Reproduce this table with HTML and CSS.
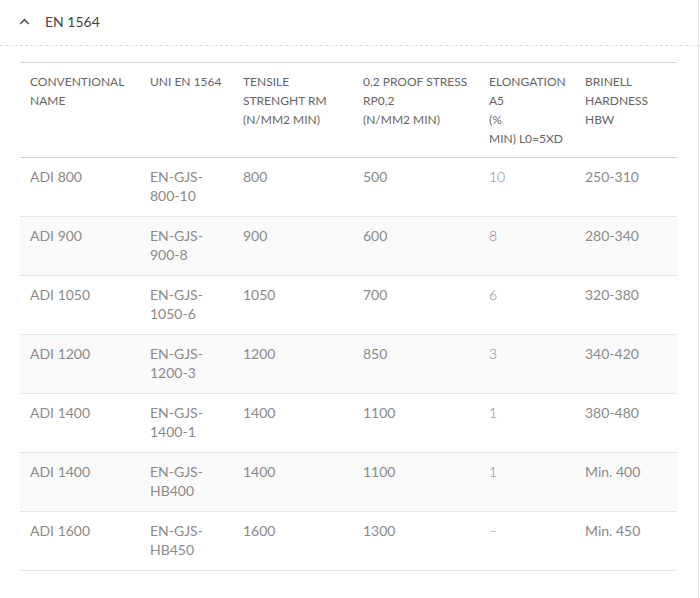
FILE: index.html
```html
<!DOCTYPE html>
<html>
<head>
<meta charset="utf-8">
<link rel="stylesheet" href="styles.css">
</head>
<body>
<div class="panel">
  <div class="acc-head">
    <svg class="chev" width="11" height="7" viewBox="0 0 11 7"><path d="M1.2 6 L5.5 1.6 L9.8 6" fill="none" stroke="#555" stroke-width="1.6"/></svg>
    <span class="acc-title">EN 1564</span>
  </div>
  <div class="acc-body">
    <table class="spec">
      <colgroup>
        <col class="c1"><col class="c2"><col class="c3"><col class="c4"><col class="c5"><col class="c6">
      </colgroup>
      <thead>
        <tr>
          <th>CONVENTIONAL<br>NAME</th>
          <th>UNI EN 1564</th>
          <th>TENSILE<br>STRENGHT RM<br>(N/MM2 MIN)</th>
          <th>0,2 PROOF STRESS<br>RP0,2<br>(N/MM2 MIN)</th>
          <th>ELONGATION<br>A5<br>(%<br>MIN) L0=5XD</th>
          <th>BRINELL<br>HARDNESS<br>HBW</th>
        </tr>
      </thead>
      <tbody>
        <tr><td>ADI 800</td><td>EN-GJS-<br>800-10</td><td>800</td><td>500</td><td class="lt">10</td><td>250-310</td></tr>
        <tr><td>ADI 900</td><td>EN-GJS-<br>900-8</td><td>900</td><td>600</td><td class="lt">8</td><td>280-340</td></tr>
        <tr><td>ADI 1050</td><td>EN-GJS-<br>1050-6</td><td>1050</td><td>700</td><td class="lt">6</td><td>320-380</td></tr>
        <tr><td>ADI 1200</td><td>EN-GJS-<br>1200-3</td><td>1200</td><td>850</td><td class="lt">3</td><td>340-420</td></tr>
        <tr><td>ADI 1400</td><td>EN-GJS-<br>1400-1</td><td>1400</td><td>1100</td><td class="lt">1</td><td>380-480</td></tr>
        <tr><td>ADI 1400</td><td>EN-GJS-<br>HB400</td><td>1400</td><td>1100</td><td class="lt">1</td><td>Min. 400</td></tr>
        <tr><td>ADI 1600</td><td>EN-GJS-<br>HB450</td><td>1600</td><td>1300</td><td class="lt">–</td><td>Min. 450</td></tr>
      </tbody>
    </table>
  </div>
</div>
</body>
</html>
```
FILE: styles.css
```css
html, body {
  margin: 0;
  padding: 0;
  background: #fff;
}
body {
  font-family: Lato, "Open Sans", sans-serif;
}
.panel {
  width: 699px;
  min-height: 598px;
  border-right: 1px solid #e4e4e4;
  box-sizing: border-box;
}
.acc-head {
  height: 46px;
  box-sizing: border-box;
  display: flex;
  align-items: center;
  padding-left: 19px;
  padding-bottom: 3px;
  border-bottom: 1px dashed #dcdcdc;
}
.chev {
  display: block;
  margin-right: 15px;
}
.acc-title {
  font-size: 14px;
  color: #444;
}
.acc-body {
  padding: 16px 0 0 20px;
}
.spec {
  border-collapse: collapse;
  table-layout: fixed;
  width: 657px;
  border-top: 1px solid #d6d6d6;
}
.c1 { width: 120px; }
.c2 { width: 93px; }
.c3 { width: 120px; }
.c4 { width: 126px; }
.c5 { width: 96px; }
.c6 { width: 102px; }
.spec th {
  text-align: left;
  vertical-align: top;
  font-weight: 400;
  font-size: 12px;
  line-height: 19px;
  color: #666;
  padding: 9px 10px;
  border-bottom: 1px solid #cfcfcf;
  white-space: nowrap;
}
.spec td {
  vertical-align: top;
  font-size: 14px;
  line-height: 19px;
  color: #8a8a8a;
  padding: 9px 10px 11px;
  border-bottom: 1px solid #e6e6e6;
}
.spec tbody tr:nth-child(even) td {
  background: #fafafa;
}
.spec td.lt {
  font-weight: 300;
  color: #888;
}
```
